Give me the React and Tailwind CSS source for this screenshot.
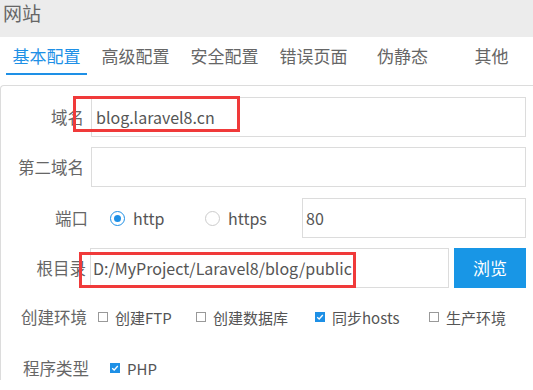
import React from 'react';

const FONT = { fontFamily: '"Noto Sans CJK SC", "Noto Sans", sans-serif' };

const tabs = ['基本配置', '高级配置', '安全配置', '错误页面', '伪静态', '其他'];

function Label({ width, children }) {
  return (
    <div className={`${width} shrink-0 text-right text-[16.5px] leading-none text-[#666]`}>
      {children}
    </div>
  );
}

function Radio({ checked, label }) {
  return (
    <div className="flex items-center">
      <span
        className={`flex h-[15px] w-[15px] items-center justify-center rounded-full border ${
          checked ? 'border-[#1e90e6]' : 'border-[#ccc]'
        }`}
      >
        {checked && <span className="h-[7px] w-[7px] rounded-full bg-[#1e90e6]" />}
      </span>
      <span className="ml-[8px] text-[16px] leading-none text-[#555]">{label}</span>
    </div>
  );
}

function Check({ checked, label }) {
  return (
    <div className="flex items-center">
      {checked ? (
        <span className="flex h-[10px] w-[10px] items-center justify-center bg-[#1e90e6]">
          <svg width="8" height="8" viewBox="0 0 8 8">
            <path d="M1.2 4.2 L3.2 6 L6.8 2" fill="none" stroke="#fff" strokeWidth="1.3" />
          </svg>
        </span>
      ) : (
        <span className="h-[10px] w-[10px] border border-[#999]" />
      )}
      <span className="ml-[7px] text-[15px] leading-none text-[#555]">{label}</span>
    </div>
  );
}

export default function App() {
  return (
    <div className="relative h-[390px] w-[533px] overflow-hidden bg-white" style={FONT}>
      {/* title bar */}
      <div className="h-[37px] bg-[#ececec] pl-[3px] text-[19px] leading-[25px] text-[#666]">网站</div>

      {/* tabs */}
      <div className="h-[48px] bg-white pl-[2px]">
        <div className="flex">
          {tabs.map((t, i) => (
            <div key={t} className="w-[89px] shrink-0">
              <div
                className={`flex h-[36px] items-center justify-center text-[17px] leading-none ${
                  i === 0 ? 'text-[#1e90e6]' : 'text-[#666]'
                }`}
              >
                {t}
              </div>
              {i === 0 && <div className="mx-[4px] h-[2px] bg-[#1e90e6]" />}
            </div>
          ))}
        </div>
      </div>

      {/* form panel */}
      <div className="rounded-tl-[4px] border-l border-t border-[#dcdcdc] pt-[11px]">
        {/* 域名 */}
        <div className="relative flex h-[40px] items-center">
          <Label width="w-[83px]">域名</Label>
          <div className="ml-[7px] flex h-[40px] w-[435px] items-center border border-[#dcdcdc] pl-[4px] text-[16px] text-[#555]">
            blog.laravel8.cn
          </div>
          <div className="absolute left-[72px] top-[-1px] h-[36px] w-[167px] border-[3px] border-[#f03a3a]" />
        </div>

        {/* 第二域名 */}
        <div className="mt-[10px] flex h-[40px] items-center">
          <Label width="w-[83px]">第二域名</Label>
          <div className="ml-[7px] h-[40px] w-[435px] border border-[#dcdcdc]" />
        </div>

        {/* 端口 */}
        <div className="mt-[11px] flex h-[40px] items-center">
          <Label width="w-[87px]">端口</Label>
          <div className="ml-[22px] flex w-[95px] shrink-0">
            <Radio checked label="http" />
          </div>
          <div className="flex w-[97px] shrink-0">
            <Radio label="https" />
          </div>
          <div className="flex h-[40px] w-[224px] items-center border border-[#dcdcdc] pl-[3px] text-[16px] text-[#555]">
            80
          </div>
        </div>

        {/* 根目录 */}
        <div className="relative mt-[10px] flex h-[40px] items-center">
          <Label width="w-[85px]">根目录</Label>
          <div className="ml-[4px] flex h-[40px] w-[359px] items-center border border-[#dcdcdc] pl-[2px] text-[16px] text-[#555]">
            D:/MyProject/Laravel8/blog/public
          </div>
          <button className="ml-[5px] h-[40px] w-[72px] bg-[#1896e6] text-[17px] text-white">浏览</button>
          <div className="absolute left-[78px] top-[4px] h-[36px] w-[277px] border-[3px] border-[#f03a3a]" />
        </div>

        {/* 创建环境 */}
        <div className="mt-[17px] flex h-[24px] items-center">
          <Label width="w-[86px]">创建环境</Label>
          <div className="ml-[11px] w-[98px] shrink-0">
            <Check label="创建FTP" />
          </div>
          <div className="w-[119px] shrink-0">
            <Check label="创建数据库" />
          </div>
          <div className="w-[114px] shrink-0">
            <Check checked label="同步hosts" />
          </div>
          <div className="shrink-0">
            <Check label="生产环境" />
          </div>
        </div>

        {/* 程序类型 */}
        <div className="mt-[27px] flex h-[24px] items-center">
          <Label width="w-[88px]">程序类型</Label>
          <div className="ml-[21px]">
            <Check checked label="PHP" />
          </div>
        </div>
      </div>
    </div>
  );
}
